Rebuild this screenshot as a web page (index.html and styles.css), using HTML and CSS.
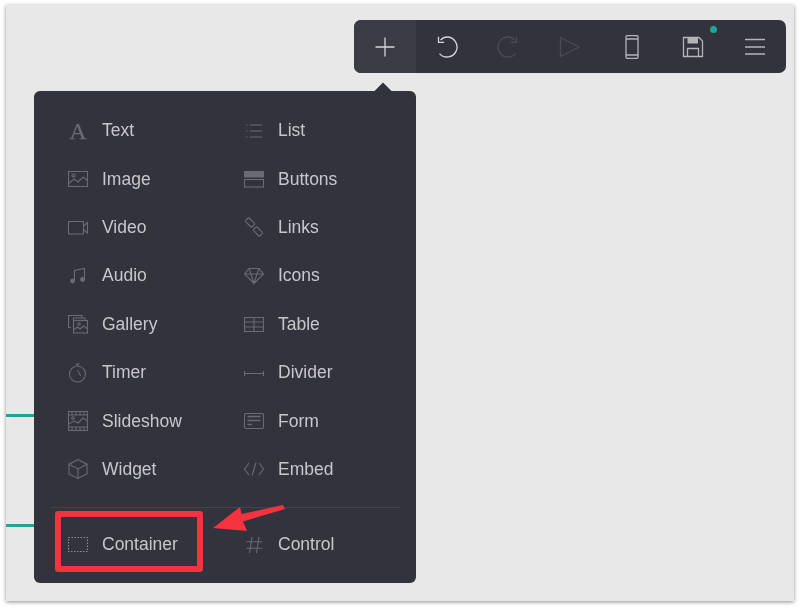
FILE: index.html
```html
<!DOCTYPE html>
<html lang="en">
<head>
<meta charset="utf-8">
<title>Add element menu</title>
<link rel="stylesheet" href="styles.css">
</head>
<body>
<main class="canvas">
  <div class="guide guide-a"></div>
  <div class="guide guide-b"></div>

  <nav class="toolbar">
    <button class="tool tool-active"><svg class="tool-icon" viewBox="0 0 24 24"><path d="M2.5 12H21.5M12 2.5V21.5"/></svg></button>
    <button class="tool"><svg class="tool-icon" viewBox="0 0 24 24"><path d="M5.5 5.2C7.2 3.2 9.5 2 12 2A10 10 0 1 1 4.5 18.6"/><path d="M3.5 1.8V7.4H9.2"/></svg></button>
    <button class="tool tool-dim"><svg class="tool-icon" viewBox="0 0 24 24"><path d="M18.5 5.2C16.8 3.2 14.5 2 12 2A10 10 0 1 0 19.5 18.6"/><path d="M20.5 1.8V7.4H14.8"/></svg></button>
    <button class="tool tool-dim"><svg class="tool-icon" viewBox="0 0 24 24"><path d="M2.5 2.5L21 12L2.5 21.5Z"/></svg></button>
    <button class="tool"><svg class="tool-icon tool-soft" viewBox="0 0 24 24"><rect x="6" y="0.5" width="12" height="23" rx="1.5"/><path d="M6 4H18M6 20H18"/></svg></button>
    <button class="tool tool-save"><svg class="tool-icon tool-soft" viewBox="0 0 24 24"><path d="M2.5 2.5H18L21.5 6V21.5H2.5Z"/><path d="M6.5 21.5V13.5H17.5V21.5"/><path class="solid" d="M6.5 3H17V8.5H6.5Z"/></svg><span class="status-dot"></span></button>
    <button class="tool"><svg class="tool-icon tool-soft" viewBox="0 0 24 24"><path d="M2 4.5H22M2 12H22M2 19H22"/></svg></button>
  </nav>

  <section class="panel">
    <span class="panel-notch"></span>
    <div class="items">
      <div class="item"><svg class="icon" viewBox="0 0 20 20"><text class="glyph-a" x="10" y="18">A</text></svg><span>Text</span></div>
      <div class="item"><svg class="icon" viewBox="0 0 20 20"><path d="M2 4H3.5M2 10H3.5M2 16H3.5M6 4H18M6 10H18M6 16H18"/></svg><span>List</span></div>

      <div class="item"><svg class="icon" viewBox="0 0 20 20"><rect x="0.5" y="2.5" width="19" height="15"/><circle cx="5.5" cy="6.5" r="1.5"/><path d="M0.5 14.5L6 10L10 13L15 8L19.5 11.5"/></svg><span>Image</span></div>
      <div class="item"><svg class="icon" viewBox="0 0 20 20"><path class="solid" d="M0 2H20V8.5H0Z"/><rect x="0.5" y="10.5" width="19" height="7.5"/></svg><span>Buttons</span></div>

      <div class="item"><svg class="icon" viewBox="0 0 20 20"><rect x="0.5" y="4.5" width="15" height="12.5" rx="0.5"/><path d="M15.5 9L19.5 5.5V16L15.5 12.5"/></svg><span>Video</span></div>
      <div class="item"><svg class="icon" viewBox="0 0 20 20"><rect x="1.5" y="3" width="9" height="5" rx="1" transform="rotate(45 6 5.5)"/><rect x="9.5" y="12" width="9" height="5" rx="1" transform="rotate(45 14 14.5)"/></svg><span>Links</span></div>

      <div class="item"><svg class="icon" viewBox="0 0 20 20"><circle class="solid" cx="4.5" cy="15" r="2.4"/><circle class="solid" cx="14.5" cy="13.5" r="2.4"/><path d="M6.5 15V4.5L16.5 2.5V13.5"/></svg><span>Audio</span></div>
      <div class="item"><svg class="icon" viewBox="0 0 20 20"><path d="M5 2.5H15L19.5 8L10 17.5L0.5 8ZM0.5 8H19.5M5 2.5L7 8L10 17.5L13 8L15 2.5"/></svg><span>Icons</span></div>

      <div class="item"><svg class="icon" viewBox="0 0 20 20"><path d="M3 13.5H0.5V1.5H14V4M5.5 16V4H17V6.5"/><rect x="5.5" y="6.5" width="14" height="12.5"/><circle cx="11" cy="10" r="1.2"/><path d="M5.5 16L9.5 13L12 15L15.5 12L19.5 15"/></svg><span>Gallery</span></div>
      <div class="item"><svg class="icon" viewBox="0 0 20 20"><rect x="0.5" y="3.5" width="19" height="14"/><path d="M0.5 8H19.5M0.5 13H19.5M10 3.5V17.5"/></svg><span>Table</span></div>

      <div class="item"><svg class="icon" viewBox="0 0 20 20"><circle cx="9.5" cy="11" r="8"/><path d="M7.5 1H11.5M9.5 1V3M9.7 7.5L12.7 13"/></svg><span>Timer</span></div>
      <div class="item"><svg class="icon" viewBox="0 0 20 20"><path d="M0.5 8V13M19.5 8V13M0.5 10.5H19.5"/></svg><span>Divider</span></div>

      <div class="item"><svg class="icon" viewBox="0 0 20 20"><rect x="0.5" y="0.5" width="19" height="19"/><path d="M0.5 4H19.5M0.5 16H19.5M4 0.5V4M8 0.5V4M12 0.5V4M16 0.5V4M4 16V19.5M8 16V19.5M12 16V19.5M16 16V19.5"/><circle cx="5" cy="7" r="1.3"/><path d="M0.5 13L6 10L10 12L15 7L19.5 10"/></svg><span>Slideshow</span></div>
      <div class="item"><svg class="icon" viewBox="0 0 20 20"><rect x="0.5" y="2.5" width="19" height="15" rx="1.5"/><path d="M3.5 5.5H16.5M3.5 9.5H16.5" class="thick"/><path d="M3.5 13.5H8" class="thick"/></svg><span>Form</span></div>

      <div class="item"><svg class="icon" viewBox="0 0 20 20"><path d="M10 0.5L19 5.2V15L10 19.5L1 15V5.2ZM1 5.2L10 10L19 5.2M10 10V19.5"/></svg><span>Widget</span></div>
      <div class="item"><svg class="icon" viewBox="0 0 20 20"><path d="M5 4L0.5 10L5 16M12 3.5L8 16.5M15 4L19.5 10L15 16"/></svg><span>Embed</span></div>
    </div>
    <div class="items items-footer">
      <div class="item"><svg class="icon icon-light" viewBox="0 0 20 20"><rect class="dashed" x="0.5" y="2.5" width="19" height="14"/></svg><span>Container</span></div>
      <div class="item"><svg class="icon" viewBox="0 0 20 20"><path d="M8 2L5.5 18M15 2L12.5 18M2 6.7H18M2 13.3H18"/></svg><span>Control</span></div>
    </div>
  </section>

  <div class="callout-box"></div>
  <svg class="callout-arrow" viewBox="0 0 80 30"><path d="M1 23L28 2L29.5 9L71 0L73 4L31 16.5L35 26Z"/></svg>
</main>
</body>
</html>
```

FILE: styles.css
```css
* {
  box-sizing: border-box;
}

html,
body {
  margin: 0;
  height: 610px;
  background: #ffffff;
  overflow: hidden;
}

body {
  padding: 5px 6px 9px;
  font-family: "Liberation Sans", Arial, sans-serif;
}

.canvas {
  position: relative;
  display: flex;
  flex-direction: column;
  width: 788px;
  height: 596px;
  padding: 15px 8px 18px 28px;
  background: #e8e8e8;
  box-shadow: 0 1px 4px rgba(0, 0, 0, 0.45);
  filter: blur(0.35px);
}

.guide {
  position: absolute;
  left: 0;
  width: 40px;
  height: 3px;
  background: #2aa198;
}

.guide-a {
  top: 409px;
}

.guide-b {
  top: 519px;
}

.toolbar {
  display: flex;
  flex: none;
  align-self: flex-end;
  width: 432px;
  height: 53px;
  background: #33333d;
  border-radius: 7px;
  overflow: hidden;
}

.tool {
  position: relative;
  display: flex;
  flex: 1;
  align-items: center;
  justify-content: center;
  padding: 0;
  border: 0;
  background: transparent;
}

.tool-active {
  background: #3b3b46;
}

.tool-icon {
  width: 24px;
  height: 24px;
  fill: none;
  stroke: #d6d6d9;
  stroke-width: 1.3;
}

.tool-soft {
  stroke: #b4b4b9;
}

.tool-soft .solid {
  fill: #b4b4b9;
  stroke: none;
}

.tool-dim .tool-icon {
  stroke: #4b4b55;
}

.status-dot {
  position: absolute;
  top: 6px;
  left: 47px;
  width: 7px;
  height: 7px;
  border-radius: 50%;
  background: #1fa598;
}

.panel {
  position: relative;
  flex: none;
  width: 382px;
  height: 492px;
  margin-top: 18px;
  padding: 15.5px 16px 15px 34px;
  background: #33333d;
  border-radius: 6px;
}

.panel-notch {
  position: absolute;
  top: -6.5px;
  left: 343px;
  width: 12px;
  height: 12px;
  background: #33333d;
  transform: rotate(45deg);
}

.items {
  display: grid;
  grid-template-columns: 176px 1fr;
  grid-auto-rows: 48.4px;
}

.items-footer {
  position: relative;
  margin: 13px 0 0 -18px;
  padding: 13px 0 0 18px;
  border-top: 1px solid #43434d;
}

.item {
  display: flex;
  align-items: center;
  gap: 14px;
  font-size: 17.5px;
  color: #c7c7ca;
}

.icon {
  flex: none;
  width: 20px;
  height: 20px;
  fill: none;
  stroke: #6a6a73;
  stroke-width: 1.1;
  overflow: visible;
}

.icon .solid {
  fill: #6a6a73;
  stroke: none;
}

.icon .thick {
  stroke-width: 1.5;
}

.icon-light {
  stroke: #8b8b92;
}

.icon .dashed {
  stroke-dasharray: 1.5 1.5;
}

.glyph-a {
  font-family: "Liberation Serif", serif;
  font-size: 24px;
  text-anchor: middle;
  fill: #6a6a73;
  stroke: #6a6a73;
  stroke-width: 0.25;
}

.callout-box {
  position: absolute;
  top: 506px;
  left: 49px;
  width: 148px;
  height: 61px;
  border: 6px solid #f5333f;
  border-radius: 3px;
}

.callout-arrow {
  position: absolute;
  top: 500px;
  left: 206px;
  width: 80px;
  height: 30px;
  fill: #f5333f;
}
```
